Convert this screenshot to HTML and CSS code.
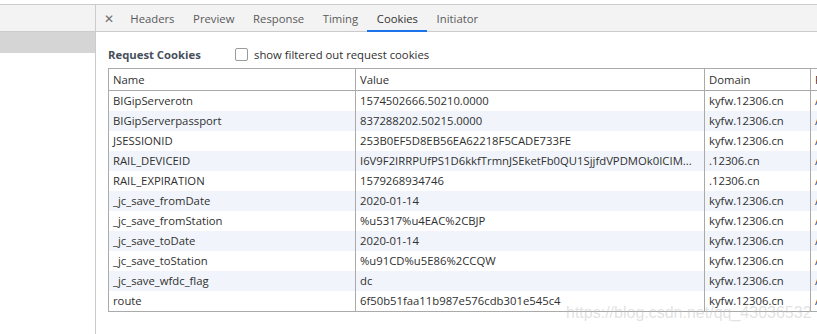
FILE: index.html
```html
<!DOCTYPE html>
<html lang="en">

<head>
    <meta charset="UTF-8">
    <title>Cookies</title>
    <link rel="stylesheet" href="styles.css">
</head>

<body>
    <div class="top-strip"></div>
    <div class="devtools">
        <div class="side-pane">
            <div class="side-head"></div>
            <div class="side-selected"></div>
        </div>
        <div class="main-pane">
            <div class="tab-bar">
                <span class="tab-close">&#x2715;</span>
                <span class="tab">Headers</span>
                <span class="tab">Preview</span>
                <span class="tab">Response</span>
                <span class="tab">Timing</span>
                <span class="tab active">Cookies</span>
                <span class="tab">Initiator</span>
            </div>
            <div class="cookies-content">
                <div class="cookies-head">
                    <span class="cookies-title">Request Cookies</span>
                    <label class="filter-label"><span class="checkbox"></span>show filtered out request cookies</label>
                </div>
                <table class="cookie-table">
                    <colgroup>
                        <col class="col-name">
                        <col class="col-value">
                        <col class="col-domain">
                        <col class="col-path">
                    </colgroup>
                    <thead>
                        <tr>
                            <th>Name</th>
                            <th>Value</th>
                            <th>Domain</th>
                            <th>Path</th>
                        </tr>
                    </thead>
                    <tbody>
                        <tr><td>BIGipServerotn</td><td>1574502666.50210.0000</td><td>kyfw.12306.cn</td><td>/</td></tr>
                        <tr><td>BIGipServerpassport</td><td>837288202.50215.0000</td><td>kyfw.12306.cn</td><td>/</td></tr>
                        <tr><td>JSESSIONID</td><td>253B0EF5D8EB56EA62218F5CADE733FE</td><td>kyfw.12306.cn</td><td>/</td></tr>
                        <tr><td>RAIL_DEVICEID</td><td>I6V9F2IRRPUfPS1D6kkfTrmnJSEketFb0QU1SjjfdVPDMOk0ICIM...</td><td>.12306.cn</td><td>/</td></tr>
                        <tr><td>RAIL_EXPIRATION</td><td>1579268934746</td><td>.12306.cn</td><td>/</td></tr>
                        <tr><td>_jc_save_fromDate</td><td>2020-01-14</td><td>kyfw.12306.cn</td><td>/</td></tr>
                        <tr><td>_jc_save_fromStation</td><td>%u5317%u4EAC%2CBJP</td><td>kyfw.12306.cn</td><td>/</td></tr>
                        <tr><td>_jc_save_toDate</td><td>2020-01-14</td><td>kyfw.12306.cn</td><td>/</td></tr>
                        <tr><td>_jc_save_toStation</td><td>%u91CD%u5E86%2CCQW</td><td>kyfw.12306.cn</td><td>/</td></tr>
                        <tr><td>_jc_save_wfdc_flag</td><td>dc</td><td>kyfw.12306.cn</td><td>/</td></tr>
                        <tr><td>route</td><td>6f50b51faa11b987e576cdb301e545c4</td><td>kyfw.12306.cn</td><td>/</td></tr>
                    </tbody>
                </table>
            </div>
        </div>
    </div>
    <div class="watermark">https://blog.csdn.net/qq_43036532</div>
</body>

</html>
```

FILE: styles.css
```css
body {
    margin: 0;
    background-color: white;
    font-family: 'Open Sans', 'Noto Sans', sans-serif;
    font-size: 11.3px;
    color: #303030;
    overflow: hidden;
}

.top-strip {
    height: 4px;
    border-bottom: 1px solid #cbcbcb;
}

.devtools {
    display: flex;
    height: 329px;
}

.side-pane {
    width: 95px;
    border-right: 1px solid #cbcbcb;
    flex-shrink: 0;
}

.side-head {
    height: 26px;
    background-color: #f3f3f3;
    border-bottom: 1px solid #cbcbcb;
}

.side-selected {
    height: 21px;
    background-color: #d5d5d5;
}

.main-pane {
    flex: 1;
    overflow: hidden;
}

.tab-bar {
    display: flex;
    align-items: stretch;
    height: 26px;
    background-color: #f3f3f3;
    border-bottom: 1px solid #cbcbcb;
    white-space: nowrap;
}

.tab-close {
    display: flex;
    align-items: center;
    padding: 0 7px 0 8px;
    font-size: 12px;
    color: #6e6e6e;
}

.tab {
    display: flex;
    align-items: center;
    padding: 1px 9.3px 0;
    color: #5a5a5a;
    border-bottom: 2px solid transparent;
    margin-bottom: -1px;
}

.tab:first-of-type {
    padding-left: 8.5px;
}

.tab.active {
    color: #333;
    border-bottom-color: #1a73e8;
}

.cookies-content {
    padding-left: 12px;
}

.cookies-head {
    display: flex;
    align-items: center;
    box-sizing: border-box;
    height: 36px;
    padding-top: 8px;
}

.cookies-title {
    font-weight: bold;
    color: #474f5c;
    width: 127px;
}

.filter-label {
    display: flex;
    align-items: center;
    color: #303030;
}

.checkbox {
    width: 11px;
    height: 11px;
    border: 1px solid #9a9a9a;
    border-radius: 2px;
    margin-right: 6px;
    background-color: white;
}

.cookie-table {
    border-collapse: collapse;
    table-layout: fixed;
    width: 760px;
    border: 1px solid #aaa;
    white-space: nowrap;
}

.col-name {
    width: 247px;
}

.col-value {
    width: 349px;
}

.col-domain {
    width: 106px;
}

.col-path {
    width: 58px;
}

th,
td {
    height: 20px;
    padding: 0 4px;
    text-align: left;
    font-weight: normal;
    border-left: 1px solid #aaa;
    overflow: hidden;
    text-overflow: ellipsis;
    line-height: 20px;
}

th {
    height: 21px;
    border-bottom: 1px solid #aaa;
}

tbody tr:nth-child(even) {
    background-color: #f1f5fb;
}

.watermark {
    position: absolute;
    left: 566px;
    top: 304px;
    font-family: 'Liberation Sans', Arial, sans-serif;
    font-size: 16px;
    color: rgba(190, 190, 190, 0.45);
}
```
